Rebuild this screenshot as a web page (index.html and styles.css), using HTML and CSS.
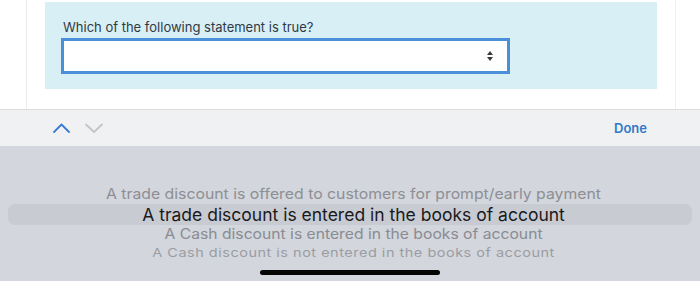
FILE: index.html
```html
<!DOCTYPE html>
<html>
<head>
<meta charset="utf-8">
<link rel="stylesheet" href="styles.css">
</head>
<body>
<div class="page">
  <div class="container">
    <div class="question">
      <div class="label">Which of the following statement is true?</div>
      <div class="select">
        <svg class="arrows" width="8" height="12" viewBox="0 0 8 12"><path d="M4 1 L7 5 L1 5 Z M4 11 L7 7 L1 7 Z" fill="#3a3a3a"/></svg>
      </div>
    </div>
  </div>
</div>
<div class="toolbar">
  <div class="nav">
    <svg width="52" height="12" viewBox="0 0 52 12"><polyline points="1,10 8.5,2.5 16,10" fill="none" stroke="#3a7bd5" stroke-width="1.8" stroke-linecap="round" stroke-linejoin="round"/><polyline points="33,2.5 41,10 49,2.5" fill="none" stroke="#c3c4c8" stroke-width="1.8" stroke-linecap="round" stroke-linejoin="round"/></svg>
  </div>
  <div class="done">Done</div>
</div>
<div class="picker">
  <div class="opt opt1">A trade discount is offered to customers for prompt/early payment</div>
  <div class="opt sel">A trade discount is entered in the books of account</div>
  <div class="opt opt3">A Cash discount is entered in the books of account</div>
  <div class="opt opt4">A Cash discount is not entered in the books of account</div>
  <div class="home"></div>
</div>
</body>
</html>
```
FILE: styles.css
```css
html, body { margin: 0; padding: 0; }
body {
  width: 700px;
  height: 281px;
  overflow: hidden;
  background: #ffffff;
  font-family: Inter, "Liberation Sans", Arial, sans-serif;
}
.page {
  height: 109px;
  display: flex;
}
.container {
  margin-left: 26px;
  width: 650px;
  border-left: 1px solid #ececec;
  border-right: 1px solid #f0f0f0;
  padding: 2px 18px 0 18px;
  box-sizing: border-box;
}
.question {
  background: #d9eff6;
  height: 87px;
  padding: 16px 16px 0 16px;
  box-sizing: border-box;
}
.label {
  font-size: 13px;
  color: #2f3a44;
  margin-left: 2px;
  line-height: 18px;
}
.select {
  margin-top: 2px;
  width: 449px;
  height: 36px;
  box-sizing: border-box;
  border: 3px solid #4b8fd8;
  background: #ffffff;
  display: flex;
  align-items: center;
  justify-content: flex-end;
  padding-right: 13px;
}
.arrows { display: block; }
.toolbar {
  height: 36px;
  border-top: 1px solid #dcdcdc;
  background: #f0f1f3;
  display: flex;
  align-items: center;
  justify-content: space-between;
  padding: 0 53px 0 53px;
}
.nav svg { display: block; }
.done {
  font-size: 13px;
  font-weight: 600;
  color: #3478c6;
}
.picker {
  height: 135px;
  background: #d3d6dc;
  padding-top: 39px;
  box-sizing: border-box;
  display: flex;
  flex-direction: column;
  align-items: stretch;
}
.opt {
  text-align: center;
  white-space: nowrap;
  height: 18px;
  line-height: 18px;
  padding-left: 7px;
}
.opt1 {
  font-size: 15.8px;
  color: #8d8f95;
  transform: scaleY(0.92);
}
.sel {
  margin: 1px 8px 0 8px;
  height: 21px;
  line-height: 21px;
  border-radius: 7px;
  background: #c8cbd2;
  font-size: 17.5px;
  color: #1a1a1c;
}
.opt3 {
  font-size: 15.7px;
  color: #8a8c93;
  transform: scaleY(0.9);
  margin-top: 1px;
}
.opt4 {
  font-size: 14.5px;
  color: #9b9da3;
  letter-spacing: 0.5px;
  transform: scaleY(0.8);
}
.home {
  margin: 8px auto 0 auto;
  width: 180px;
  height: 5px;
  border-radius: 3px;
  background: #050505;
}
```
